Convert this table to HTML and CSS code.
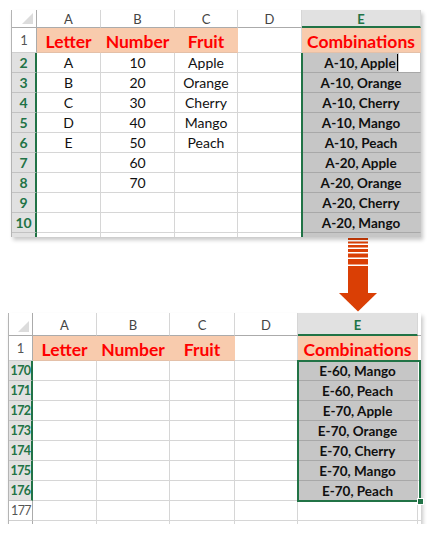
FILE: index.html
```html
<!DOCTYPE html>
<html>
<head>
<meta charset="utf-8">
<link rel="stylesheet" href="styles.css">
</head>
<body>
<div class="sheet sheet-top">
  <div class="c corner"><span class="tri"></span></div>
  <div class="c ch">A</div><div class="c ch">B</div><div class="c ch">C</div><div class="c ch">D</div><div class="c ch sel">E</div>

  <div class="c rh">1</div>
  <div class="c hd">Letter</div><div class="c hd">Number</div><div class="c hd">Fruit</div><div class="c"></div><div class="c hd">Combinations</div>

  <div class="c rh sel">2</div><div class="c">A</div><div class="c">10</div><div class="c">Apple</div><div class="c"></div><div class="c s active">A-10, Apple<span class="cursor"></span></div>
  <div class="c rh sel">3</div><div class="c">B</div><div class="c">20</div><div class="c">Orange</div><div class="c"></div><div class="c s">A-10, Orange</div>
  <div class="c rh sel">4</div><div class="c">C</div><div class="c">30</div><div class="c">Cherry</div><div class="c"></div><div class="c s">A-10, Cherry</div>
  <div class="c rh sel">5</div><div class="c">D</div><div class="c">40</div><div class="c">Mango</div><div class="c"></div><div class="c s">A-10, Mango</div>
  <div class="c rh sel">6</div><div class="c">E</div><div class="c">50</div><div class="c">Peach</div><div class="c"></div><div class="c s">A-10, Peach</div>
  <div class="c rh sel">7</div><div class="c"></div><div class="c">60</div><div class="c"></div><div class="c"></div><div class="c s">A-20, Apple</div>
  <div class="c rh sel">8</div><div class="c"></div><div class="c">70</div><div class="c"></div><div class="c"></div><div class="c s">A-20, Orange</div>
  <div class="c rh sel">9</div><div class="c"></div><div class="c"></div><div class="c"></div><div class="c"></div><div class="c s">A-20, Cherry</div>
  <div class="c rh sel">10</div><div class="c"></div><div class="c"></div><div class="c"></div><div class="c"></div><div class="c s">A-20, Mango</div>
  <div class="c rh sel part"></div><div class="c part"></div><div class="c part"></div><div class="c part"></div><div class="c part"></div><div class="c s part"></div>

  <div class="selbox-top"></div>
</div>

<div class="arrow-row">
  <svg width="40" height="76" viewBox="0 0 40 76">
    <g fill="#da3f05">
      <rect x="10" y="1" width="20" height="2"/>
      <rect x="10" y="4.5" width="20" height="2"/>
      <rect x="10" y="8" width="20" height="2.5"/>
      <rect x="10" y="12" width="20" height="3"/>
      <rect x="10" y="16.5" width="20" height="4"/>
      <rect x="10" y="22" width="20" height="5.5"/>
      <rect x="10" y="29" width="20" height="28"/>
      <polygon points="1,56 39,56 20,74.5"/>
    </g>
  </svg>
</div>

<div class="sheet sheet-bottom">
  <div class="c corner"><span class="tri"></span></div>
  <div class="c ch">A</div><div class="c ch">B</div><div class="c ch">C</div><div class="c ch">D</div><div class="c ch sel">E</div><div class="c ch edge"></div>

  <div class="c rh">1</div>
  <div class="c hd">Letter</div><div class="c hd">Number</div><div class="c hd">Fruit</div><div class="c"></div><div class="c hd">Combinations</div><div class="c edge"></div>

  <div class="c rh sel n3">170</div><div class="c"></div><div class="c"></div><div class="c"></div><div class="c"></div><div class="c s">E-60, Mango</div><div class="c edge"></div>
  <div class="c rh sel n3">171</div><div class="c"></div><div class="c"></div><div class="c"></div><div class="c"></div><div class="c s">E-60, Peach</div><div class="c edge"></div>
  <div class="c rh sel n3">172</div><div class="c"></div><div class="c"></div><div class="c"></div><div class="c"></div><div class="c s">E-70, Apple</div><div class="c edge"></div>
  <div class="c rh sel n3">173</div><div class="c"></div><div class="c"></div><div class="c"></div><div class="c"></div><div class="c s">E-70, Orange</div><div class="c edge"></div>
  <div class="c rh sel n3">174</div><div class="c"></div><div class="c"></div><div class="c"></div><div class="c"></div><div class="c s">E-70, Cherry</div><div class="c edge"></div>
  <div class="c rh sel n3">175</div><div class="c"></div><div class="c"></div><div class="c"></div><div class="c"></div><div class="c s">E-70, Mango</div><div class="c edge"></div>
  <div class="c rh sel n3">176</div><div class="c"></div><div class="c"></div><div class="c"></div><div class="c"></div><div class="c s">E-70, Peach</div><div class="c edge"></div>
  <div class="c rh n3">177</div><div class="c"></div><div class="c"></div><div class="c"></div><div class="c"></div><div class="c"></div><div class="c edge"></div>
  <div class="c rh part"></div><div class="c part"></div><div class="c part"></div><div class="c part"></div><div class="c part"></div><div class="c part"></div><div class="c edge part"></div>

  <div class="selbox-bottom"><span class="handle"></span></div>
</div>
</body>
</html>
```

FILE: styles.css
```css
html, body {
  margin: 0;
  padding: 0;
  background: #ffffff;
}

body {
  font-family: Lato, "Open Sans", sans-serif;
  color: #111;
}

.sheet {
  position: relative;
  display: grid;
  width: max-content;
  border-left: 1px solid #b4b4b4;
  box-shadow: 2px 3px 4px rgba(0, 0, 0, 0.22);
  background: #fff;
}

.sheet-top {
  margin: 10px 0 0 11px;
  grid-template-columns: 25px 64px 74px 63px 64px 119px;
  grid-template-rows: 18px 25px repeat(9, 20px) 4px;
}

.sheet-bottom {
  margin: 0 0 0 8px;
  grid-template-columns: 24px 64px 73px 65px 63px 120px 3px;
  grid-template-rows: 23px 25px repeat(8, 20px) 3px;
}

.c {
  box-sizing: border-box;
  border-right: 1px solid #d6d6d6;
  border-bottom: 1px solid #d6d6d6;
  display: flex;
  align-items: center;
  justify-content: center;
  font-size: 14px;
  white-space: nowrap;
  overflow: hidden;
  color: #111;
}

.c.part {
  border-bottom: none;
}

.c.edge {
  border-right: none;
}

.corner {
  position: relative;
  border-bottom-color: #ababab;
  border-right-color: #ababab;
}

.tri {
  position: absolute;
  right: 3px;
  bottom: 3px;
  width: 0;
  height: 0;
  border-left: 11px solid transparent;
  border-bottom: 11px solid #dcdcdc;
}

.ch {
  font-size: 13px;
  color: #444;
  border-bottom-color: #ababab;
  padding-top: 1px;
}

.ch.sel {
  background: #e1e1e1;
  color: #217346;
  font-weight: 700;
  border-bottom: 2px solid #217346;
  padding-top: 2px;
}

.ch.edge {
  border-bottom-color: #ababab;
}

.rh {
  font-size: 13px;
  color: #555;
  border-right-color: #ababab;
  border-bottom-color: #cfcfcf;
}

.rh.sel {
  background: #e1e1e1;
  color: #217346;
  font-weight: 700;
  font-size: 14px;
  border-right: 2px solid #217346;
  border-bottom-color: #c2c2c2;
}

.rh.n3 {
  font-size: 12.5px;
  letter-spacing: -0.6px;
  padding-left: 1px;
}

.hd {
  background: #f8cbad;
  color: #ff0000;
  font-weight: 700;
  font-size: 17.5px;
  border-right-color: #f8cbad;
  border-bottom-color: #e4c0a8;
  padding-top: 2px;
}

.s {
  background: #c6c6c6;
  font-weight: 700;
  font-size: 13.5px;
  color: #101010;
  border-bottom-color: #a8a8a8;
  border-right-color: #c6c6c6;
}

.s.active {
  background: linear-gradient(to right, #c6c6c6 97px, #ffffff 97px);
}

.cursor {
  display: inline-block;
  width: 1px;
  height: 17px;
  background: #000;
  margin-left: 1px;
}

.selbox-top {
  position: absolute;
  grid-column: 6;
  grid-row: 3 / 13;
  top: 0;
  bottom: 0;
  left: -1px;
  width: 0;
  border-left: 2px solid #217346;
  pointer-events: none;
}

.selbox-bottom {
  position: absolute;
  grid-column: 6;
  grid-row: 3 / 10;
  top: -1px;
  bottom: -1px;
  left: -1px;
  right: 0;
  border: 2px solid #217346;
  pointer-events: none;
}

.handle {
  position: absolute;
  right: -5px;
  bottom: -5px;
  width: 5px;
  height: 5px;
  background: #217346;
  border: 1px solid #fff;
}

.arrow-row {
  height: 76px;
  padding-left: 338px;
}

.arrow-row svg {
  display: block;
}
```
